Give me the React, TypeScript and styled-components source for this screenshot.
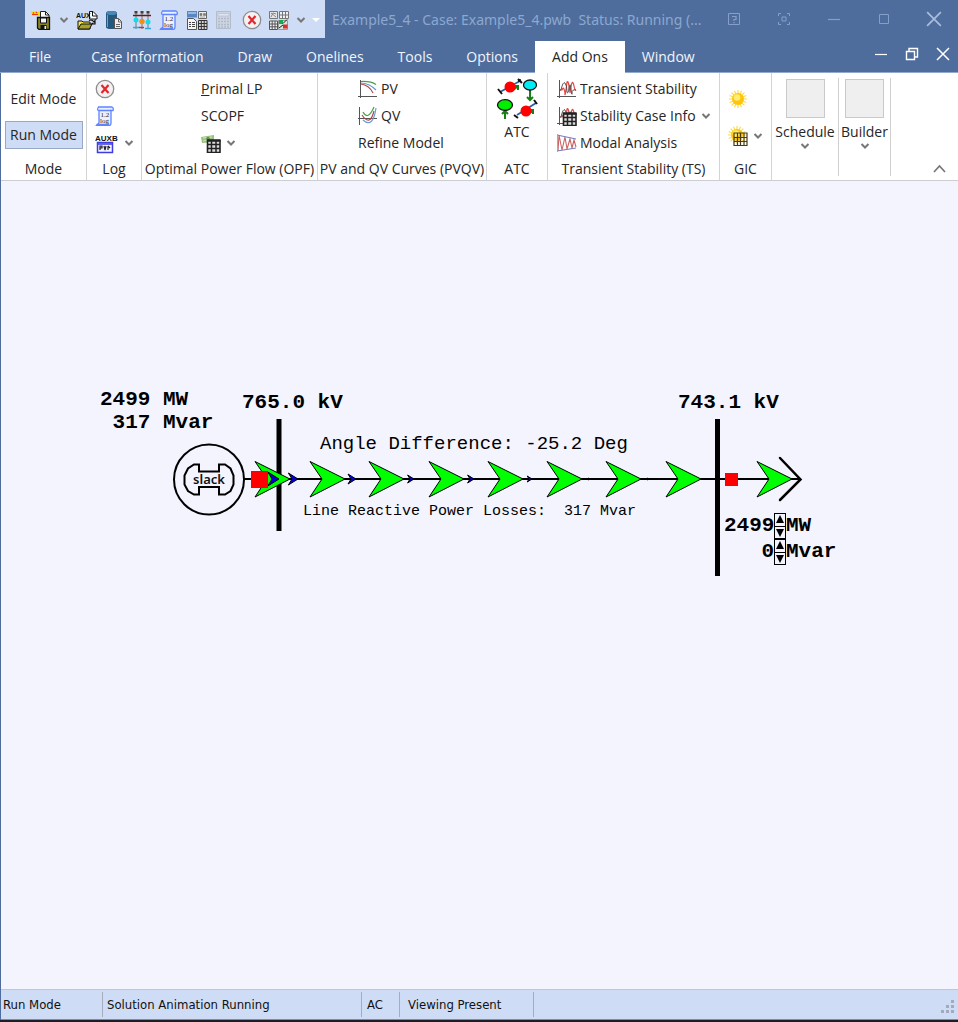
import React from "react";
import styled, { createGlobalStyle } from "styled-components";

const sans = `"Open Sans", "Noto Sans", sans-serif`;
const mono = `"Liberation Mono", monospace`;
const blue = "#4f6d9c";
const pale = "#cfdcf5";

const GlobalStyle = createGlobalStyle`
  * { box-sizing: border-box; }
  html, body { margin: 0; padding: 0; }
  body { font-family: ${sans}; font-size: 14px; color: #262626; background: ${blue}; }
  button { font: inherit; color: inherit; background: none; border: 0; padding: 0; margin: 0; }
  svg { display: block; flex: none; }
`;

const Frame = styled.div`
  display: flex;
  flex-direction: column;
  min-height: 100vh;
  border-bottom: 2px solid #1b1e25;
`;

const TitleBar = styled.header`
  display: flex;
  align-items: center;
  height: 38px;
`;

const QuickBar = styled.div`
  display: flex;
  align-items: center;
  align-self: stretch;
  flex: none;
  width: 300px;
  margin-left: 25px;
  padding: 2px 2px 0;
  background: ${pale};
`;

const QuickIcons = styled.div`
  display: flex;
  flex: 1;
`;

const IconButton = styled.button<{ $w?: number }>`
  display: flex;
  align-items: center;
  justify-content: center;
  height: 24px;
  ${(p) => (p.$w ? `width: ${p.$w}px; flex: none;` : "flex: 1;")}
`;

const Title = styled.h1`
  flex: 1;
  min-width: 0;
  margin: 0;
  padding-left: 7px;
  font-family: "Noto Sans", sans-serif;
  font-size: 14px;
  font-weight: 400;
  color: #8ba8d0;
  white-space: pre;
  overflow: hidden;
  text-overflow: ellipsis;
`;

const WindowControls = styled.div`
  display: flex;
  flex: none;
  margin-right: -1px;
`;

const TabRow = styled.nav`
  display: flex;
  align-items: flex-end;
  height: 35px;
  padding-left: 12px;
  border-bottom: 1px solid #92a9ce;
`;

const Tab = styled.button<{ $active?: boolean }>`
  height: ${(p) => (p.$active ? 32 : 31)}px;
  padding: 0 17px ${(p) => (p.$active ? 1 : 0)}px;
  white-space: nowrap;
  color: ${(p) => (p.$active ? "#262626" : "#f0f5ff")};
  background: ${(p) => (p.$active ? "#fff" : "transparent")};
  margin-bottom: ${(p) => (p.$active ? "-1px" : "0")};
`;

const FileTab = styled(Tab)`
  margin-right: 6px;
`;

const DocControls = styled.div`
  display: flex;
  margin-left: auto;
  align-self: flex-start;
  padding-top: 4px;
`;

const Ribbon = styled.section`
  display: flex;
  height: 108px;
  margin-left: 1px;
  background: #fff;
  border-bottom: 1px solid #cdced2;
`;

const Group = styled.div<{ $w: number }>`
  display: flex;
  flex-direction: column;
  flex: none;
  width: ${(p) => p.$w}px;
  border-right: 1px solid #d4d4d4;
`;

const GroupBody = styled.div<{ $align?: string; $pad?: number }>`
  display: flex;
  flex-direction: column;
  align-items: ${(p) => p.$align || "center"};
  padding: 2px 0 0 ${(p) => p.$pad || 0}px;
  height: 86px;
`;

const GroupName = styled.div`
  display: flex;
  justify-content: center;
  line-height: 20px;
  white-space: nowrap;
`;

const Command = styled.button`
  display: flex;
  align-items: center;
  gap: 3px;
  height: 27px;
  white-space: nowrap;
`;

const Caret = styled.span`
  margin-left: 2px;
`;

const ModeButton = styled.button<{ $on?: boolean }>`
  width: 78px;
  height: 28px;
  margin-top: 10px;
  padding-bottom: 2px;
  border: 1px solid ${(p) => (p.$on ? "#98a8c6" : "transparent")};
  background: ${(p) => (p.$on ? pale : "transparent")};

  & + & { margin-top: 8px; }
`;

const AtcButton = styled.button`
  display: flex;
  flex-direction: column;
  align-items: center;
  gap: 2px;
  margin-top: 3px;
  line-height: 20px;
`;

const GicButton = styled(Command)`
  height: 28px;
  margin-top: 10px;

  & + & { margin-top: 9px; }
`;

const Launcher = styled.button<{ $w: number }>`
  display: flex;
  flex-direction: column;
  align-items: center;
  flex: none;
  width: ${(p) => p.$w}px;
  height: 98px;
  margin-top: 5px;
  padding-top: 1px;
  border-right: 1px solid #cfcfcf;
  line-height: 20px;
`;

const Swatch = styled.span`
  width: 39px;
  height: 39px;
  margin-bottom: 4px;
  border: 1px solid #c9c9c9;
  background: #efefef;
`;

const Collapse = styled.button`
  margin: auto 12px 7px auto;
`;

const Canvas = styled.main`
  position: relative;
  flex: 1;
  min-height: 420px;
  margin-left: 1px;
  background: #f4f4fe;
  overflow: hidden;
`;

const Label = styled.div<{ $x: number; $y: number; $size?: number; $bold?: boolean }>`
  position: absolute;
  left: ${(p) => p.$x}px;
  top: ${(p) => p.$y}px;
  font-family: ${mono};
  font-size: ${(p) => p.$size || 21}px;
  font-weight: ${(p) => (p.$bold ? 700 : 400)};
  line-height: 23px;
  white-space: pre;
  color: #000;
`;

const LoadRow = styled(Label)`
  display: flex;
  align-items: center;
  line-height: 26px;
`;

const LoadValue = styled.span`
  width: 50px;
  text-align: right;
`;

const Spinner = styled.span`
  display: flex;
  flex-direction: column;
  width: 12px;
  height: 26px;
  border: 1px solid #000;
`;

const Step = styled.button`
  display: flex;
  flex: 1;
  align-items: center;
  justify-content: center;

  & + & { border-top: 1px solid #000; }
`;

const StatusBar = styled.footer`
  display: flex;
  align-items: center;
  height: 31px;
  margin-left: 1px;
  background: ${pale};
  border-top: 1px solid #c2c6d0;
  border-bottom: 1px solid #6f8fc2;
  font-family: "DejaVu Sans Condensed", "Noto Sans", sans-serif;
  font-size: 13px;
  color: #111;
`;

const StatusCell = styled.div<{ $w: number; $pad: number }>`
  width: ${(p) => p.$w}px;
  height: 25px;
  line-height: 25px;
  padding-left: ${(p) => p.$pad}px;
  border-right: 1px solid #a5acbb;
  white-space: nowrap;
`;

const Grip = styled.span`
  margin: 4px 4px 0 auto;
`;

const IconText = styled.text`
  font-family: "Liberation Sans Narrow", "Liberation Sans", sans-serif;
  font-weight: 700;
  fill: #111;
`;

const Chevron = () => (
  <svg width="10" height="8" viewBox="0 0 10 8">
    <path d="M1.500 2 5 5.500 8.500 2" fill="none" stroke="#777" strokeWidth="2" />
  </svg>
);

const SaveIcon = () => (
  <svg width="20" height="20" viewBox="0 0 20 20">
    <path d="M9.500 1.500h5l3.500 3.500V12h-8.500z" fill="#fff" stroke="#222" />
    <path d="M14.500 1.500v3.500h3.500" fill="none" stroke="#222" />
    <path d="M0 1l2 1 2-1 2 1 3-1v5H1z" fill="#ffd800" />
    <path d="M1 4.500h6M2 2.500l1 1M5 2l1 1" stroke="#e33b12" strokeWidth="1.200" />
    <path d="M6.500 7.500h12v12H8l-1.500-1.500z" fill="#8a8420" stroke="#111" strokeWidth="1.300" />
    <path d="M9.500 8h6v5h-6z" fill="#f3f3f3" stroke="#111" />
    <path d="M9.500 15h6v4.500h-6z" fill="#111" />
    <path d="M13.500 16H15v3h-1.500z" fill="#eee" />
  </svg>
);

const AuxOpenIcon = () => (
  <svg width="22" height="20" viewBox="0 0 22 20" overflow="visible">
    <path d="M13.500 1.500h3.500l4 4V9h-7.500z" fill="#fff" stroke="#111" />
    <path d="M16.500 1.500V6H21" fill="none" stroke="#111" />
    <IconText x="0" y="8" fontSize="7">AUX</IconText>
    <path d="M2 11h4l1 1h7v7H2z" fill="#f4e94c" stroke="#111" />
    <path d="M2 19l3-5h11l-2.500 5z" fill="#a8a02a" stroke="#111" />
    <path d="M13 10.500q3-1.500 5 1.500l1-1.500v3.500h-3l1.200-1" fill="none" stroke="#111" strokeWidth="1.200" />
  </svg>
);

const CaseIcon = () => (
  <svg width="20" height="20" viewBox="0 0 20 20">
    <path d="M2 3q0-2 5.500-2T13 3v14q0 2-5.500 2T2 17z" fill="#24587c" />
    <ellipse cx="7.500" cy="3" rx="5.500" ry="2" fill="#4789b4" />
    <path d="M3.500 5v12" stroke="#6fa5c8" />
    <path d="M10.500 8.500h4l3 3v7h-7z" fill="#eee" stroke="#555" />
    <path d="M14.500 8.500V12h3M12 14.500h4M12 16.500h4" fill="none" stroke="#666" />
  </svg>
);

const BusesIcon = () => (
  <svg width="20" height="20" viewBox="0 0 20 20">
    <path d="M4 1v18M10 1v18M16 1v18" stroke="#777" />
    <path d="M1 5.500h18" stroke="#7a1010" strokeWidth="1.500" />
    <path d="M2.500 1h3v2.500h-3zM8.500 1h3v2.500h-3zM14.500 1h3v2.500h-3z" fill="#443" />
    <circle cx="4" cy="10" r="2.500" fill="#16d9ea" />
    <circle cx="10" cy="11.500" r="2.700" fill="#f58d16" />
    <circle cx="16" cy="12" r="2.500" fill="#16d9ea" />
    <path d="M1 17.500h6M13 18.500h6" stroke="#30a8e0" strokeWidth="1.400" />
    <path d="M7 17.500h5" stroke="#e82020" strokeWidth="1.400" />
  </svg>
);

const LogIcon = () => (
  <svg width="20" height="20" viewBox="0 0 20 20">
    <path d="M3.500 1H17q2 1 1 3.500h-2V17q0 2.500-2 2.500H1.500L4 17V5Q1.500 4 3.500 1z" fill="#e9f0ff" stroke="#5f83ff" strokeWidth="1.300" />
    <path d="M4 4.500h12M1.500 18.500H14" stroke="#5f83ff" strokeWidth="1.600" />
    <text x="5.500" y="11" fontFamily="Liberation Serif" fontSize="7" fill="#222">1.2</text>
    <text x="5" y="17" fontFamily="Liberation Serif" fontSize="7" fill="#222">log</text>
  </svg>
);

const ModelIcon = () => (
  <svg width="22" height="20" viewBox="0 0 22 20">
    <path d="M1 1h10v6.500H1z" fill="#5588c5" />
    <path d="M2 3h8" stroke="#dbe8fa" />
    <path d="M12.500 1.500h8v7h-8z" fill="#eee" stroke="#666" />
    <path d="M14 3.500h2v2h-2zM17.500 3.500h2v2h-2zM14 7h5" fill="#777" stroke="#777" strokeWidth=".6" />
    <path d="M1.500 8.500h6l3 3v8h-9z" fill="#f5f5f5" stroke="#555" />
    <path d="M3 12.500h2M6 12.500h3M3 14.500h2M6 14.500h3M3 16.500h2M6 16.500h3" stroke="#444" />
    <path d="M12.500 10.500h8.500v9h-8.500zM15.300 10.500v9M18.200 10.500v9M12.500 13.500H21M12.500 16.500H21" fill="#d4d4d4" stroke="#333" />
  </svg>
);

const CalcIcon = () => (
  <svg width="18" height="20" viewBox="0 0 18 20">
    <path d="M1.500 1.500h14v17h-14z" fill="#cdd5e3" stroke="#b4bccb" />
    <path d="M3 3.500h11V6H3z" fill="#dfe6f2" stroke="#b4bccb" strokeWidth=".7" />
    <path d="M3 8.500h11M3 11.500h11M3 14.500h11M3 17h11" stroke="#b1bac9" strokeWidth="1.500" strokeDasharray="2 1" />
  </svg>
);

const StopIcon = () => (
  <svg width="20" height="20" viewBox="0 0 20 20">
    <circle cx="10" cy="10" r="8.700" fill="#f3f1f1" stroke="#8d8d8d" strokeWidth="1.300" />
    <path d="m6.500 6 7 8m0-8-7 8" stroke="#e5262b" strokeWidth="2.200" />
  </svg>
);

const GridsIcon = () => (
  <svg width="20" height="20" viewBox="0 0 20 20">
    <path d="M.5 1.500h8v7h-8z" fill="#e5e5e5" stroke="#777" />
    <path d="M2 3l5 4M2 7l2-4 3 1" stroke="#888" fill="none" />
    <path d="M10.500 1.500h9v7h-9zM13.500 1.500v7M16.500 1.500v7M10.500 5h9" fill="#f2f2f2" stroke="#777" />
    <path d="M.5 11h8v8.500h-8zM3.200 11v8.500M6 11v8.500M.5 14h8M.5 16.800h8" fill="#f2f2f2" stroke="#555" />
    <path d="M9.500 10.500h9v9h-9z" fill="#d8e6df" stroke="#999" />
    <path d="M10 10h4v4h-4z" fill="#16ab52" />
    <path d="M14 14.500h4.500v4H14z" fill="#e02b2b" />
    <path d="M18 9.500l-4 4M10 18l4-3" stroke="#222" />
  </svg>
);

const AuxLogIcon = () => (
  <svg width="24" height="20" viewBox="0 0 24 20" overflow="visible">
    <path d="M2.500 9.500h15v10h-15z" fill="#f2f4ff" stroke="#3c3ce0" strokeWidth="1.500" />
    <IconText x="0" y="8" fontSize="8">AUXB</IconText>
    <path d="M3 11h14" stroke="#3c3ce0" strokeWidth="1.500" />
    <path d="M5 17v-4h2v2H5m4-2 1 4 1-4m2 0v4m0-4 2 2" fill="none" stroke="#222" strokeWidth="1.200" />
  </svg>
);

const TableGrid = () => (
  <g>
    <path d="M6.500 7.500h12.500v12H6.500z" fill="#ddd" stroke="#222" strokeWidth="1.600" />
    <path d="M6 7.500h13.500" stroke="#222" strokeWidth="2.400" />
    <path d="M10.500 7v12M15 7v12M6 11.500h13M6 15.500h13" stroke="#222" strokeWidth="1.500" />
  </g>
);

const OpfIcon = () => (
  <svg width="20" height="20" viewBox="0 0 20 20">
    <path d="M0 4l13-2v7L1 10z" fill="#9ac080" />
    <path d="M2 5l9-1M2 8l4-1" stroke="#d2e6c4" />
    <circle cx="7" cy="5.500" r="1.800" fill="#5f9548" />
    <TableGrid />
  </svg>
);

const PvIcon = () => (
  <svg width="20" height="20" viewBox="0 0 20 20">
    <path d="M2.500 1v18M0 17.500h19" stroke="#555" fill="none" />
    <path d="M3 2.500q10-.5 15 3" stroke="#4aa04a" fill="none" strokeWidth="1.200" />
    <path d="M3 4q8 0 15 7" stroke="#6b9bd6" fill="none" strokeWidth="1.200" />
    <path d="M3 5q8 1 12 9" stroke="#b54545" fill="none" strokeWidth="1.200" />
  </svg>
);

const QvIcon = () => (
  <svg width="20" height="20" viewBox="0 0 20 20">
    <path d="M1.500 1v18M0 12.500h19" stroke="#555" fill="none" />
    <path d="M5 6q5 9 11-5" stroke="#4aa04a" fill="none" strokeWidth="1.200" />
    <path d="M4 9q8 12 12-4" stroke="#b54545" fill="none" strokeWidth="1.200" />
    <path d="M5 14q10 9 13-12" stroke="#6b9bd6" fill="none" strokeWidth="1.200" />
  </svg>
);

const AtcIcon = () => (
  <svg width="42" height="42" viewBox="0 0 42 42">
    <path d="m4 14 20-11" stroke="#2a5ca8" strokeWidth="1.700" />
    <path d="m2 11 4 5M22 1l4 4m-4-2 3-1" stroke="#111" strokeWidth="2" />
    <path d="m16 13 6-5m-4 0h4v4" stroke="#168016" strokeWidth="2" fill="none" />
    <circle cx="14" cy="9" r="5.500" fill="#f00" />
    <path d="M34 11v10m-3-2 3 3 3-3" stroke="#168016" strokeWidth="2" fill="none" />
    <ellipse cx="34" cy="7" rx="6.500" ry="5" fill="#00ecf4" stroke="#111" strokeWidth="1.300" />
    <path d="M9 31v10m-3-5 3-3 3 3" stroke="#168016" strokeWidth="2" fill="none" />
    <ellipse cx="9" cy="27" rx="7.500" ry="5.300" fill="#0e0" stroke="#111" strokeWidth="1.300" />
    <path d="m21 37 19-12" stroke="#2a5ca8" strokeWidth="1.700" />
    <path d="m18 37 4 3M38 22l3 4" stroke="#111" strokeWidth="2" />
    <path d="m32 36 5-4m-3 0h3v4" stroke="#168016" strokeWidth="2" fill="none" />
    <circle cx="30" cy="33" r="5.500" fill="#f00" />
  </svg>
);

const Wave = () => (
  <g fill="none">
    <path d="M2.500 1v18M0 17.500h19" stroke="#555" />
    <path d="M3 11h2q1-3 2-1t1 6q1-4 2-13 1-2 2 4t1 7q1-8 2-10t2 3 2 4" stroke="#e04545" strokeWidth="1.200" />
    <path d="M3 11h1q2-9 4-7t2 9q1 3 2-4t2 1 1 4 4-3" stroke="#444" strokeWidth=".9" />
  </g>
);

const TransientIcon = () => (
  <svg width="20" height="20" viewBox="0 0 20 20"><Wave /></svg>
);

const StabilityIcon = () => (
  <svg width="20" height="20" viewBox="0 0 20 20"><Wave /><TableGrid /></svg>
);

const ModalIcon = () => (
  <svg width="20" height="20" viewBox="0 0 20 20">
    <path d="M1 18 2 2l3 15L8 4l2 12 3-10 2 9 2-8 2 7" fill="none" stroke="#c86464" strokeWidth="1.100" />
    <path d="M0 2l19 4M0 18l19-3" stroke="#7278bd" />
    <path d="M.5 1v18" stroke="#aaa" />
  </svg>
);

const SunShape = () => (
  <g>
    <path d="M10 1v18M1 10h18M3.600 3.600l12.800 12.800M16.400 3.600 3.600 16.400M6.500 1.700l7 16.600M13.500 1.700l-7 16.600M1.700 6.500l16.600 7M1.700 13.500l16.600-7" stroke="#fbdc4c" strokeWidth="1.200" />
    <circle cx="10" cy="10" r="6" fill="#ffc50a" />
    <circle cx="9" cy="8.500" r="3.300" fill="#ffec70" />
  </g>
);

const SunIcon = () => (
  <svg width="20" height="20" viewBox="0 0 20 20"><SunShape /></svg>
);

const SunGridIcon = () => (
  <svg width="20" height="20" viewBox="0 0 20 20">
    <g transform="translate(-1 -1)"><SunShape /></g>
    <path d="M6 7h13v12.500H6zM9.500 7v12M12.500 7v12M16 7v12M6 11.500h13M6 15.500h13" fill="none" stroke="#4a3c10" strokeWidth="1.200" />
  </svg>
);

const Glyph = ({ kind, color, size = 14 }: { kind: string; color: string; size?: number }) => (
  <svg width={size} height={size} viewBox="0 0 14 14" fill="none" stroke={color}>
    {kind === "help" && (
      <>
        <path d="M1.500 1.500h11v11h-11z" />
        <path d="M5 4.500h4v3H7v1.500M7 10v1.200" strokeWidth="1.200" />
      </>
    )}
    {kind === "focus" && <path d="M1.500 4V1.500H4M10 1.500h2.500V4M12.500 10v2.500H10M4 12.500H1.500V10M5 5h4v4H5z" />}
    {kind === "min" && <path d="M1 7.500h12" strokeWidth="1.200" />}
    {kind === "max" && <path d="M2.500 2.500h9v9h-9z" />}
    {kind === "restore" && <path d="M1.500 4.500h8v8h-8zM4 4V1.500h8.500V10H10" strokeWidth="1.400" />}
    {kind === "close" && <path d="m1 1 12 12M13 1 1 13" strokeWidth="1.500" />}
  </svg>
);

const GREEN_ARROWS = [255, 310, 369, 429, 488, 547, 606, 666, 757];
const BLUE_ARROWS = [
  { tip: 279, size: 7 },
  { tip: 298, size: 6 },
  { tip: 356, size: 5 },
  { tip: 414, size: 4 },
  { tip: 474, size: 4 },
  { tip: 532, size: 3 },
  { tip: 590, size: 1 },
  { tip: 649, size: 1 },
];

const Diagram = () => (
  <svg width="860" height="420" viewBox="1 181 860 420" role="img" aria-label="Two bus oneline diagram">
    <circle cx="209" cy="479.500" r="35" fill="none" stroke="#000" strokeWidth="2" />
    <path
      d="M199 464.500h-5l-6 4-3.500 7v9l3.500 6.500 6 3.500h5v-7.500h20v7.500h6l5.500-3.500 3-6.500v-9l-3-7-5.500-4h-6v7h-20z"
      fill="none" stroke="#000" strokeWidth="2"
    />
    <text x="209" y="484" textAnchor="middle" fontFamily="Noto Sans" fontWeight="600" fontSize="13" fill="#111">slack</text>
    <path d="M244 479h556" stroke="#000" strokeWidth="2" />
    <path d="M279 419v112M717.500 419v157" stroke="#000" strokeWidth="5" />
    <path d="m780 458 20.500 21.500L780 500" fill="none" stroke="#000" strokeWidth="2.500" strokeLinecap="round" />
    {GREEN_ARROWS.map((x) => (
      <path key={x} d={`M${x} 461.500l35 17.500-35 18 12-18z`} fill="#0f0" stroke="#000" />
    ))}
    {BLUE_ARROWS.map(({ tip, size }) => (
      <path key={tip} d={`M${tip} 479l${-size * 1.6}${-size}${" "}${size * 0.6} ${size}${" "}${-size * 0.6} ${size}z`} fill="#0000d8" stroke="#000" />
    ))}
    <path d="M251 471h17v17h-17zM725 473h13v13h-13z" fill="#f00" />
  </svg>
);

const DiagramLayer = styled.div`
  position: absolute;
  left: 0;
  top: 0;
`;

const Load = ({ y, value, unit }: { y: number; value: string; unit: string }) => (
  <LoadRow $x={723} $y={y} $bold>
    <LoadValue>{value}</LoadValue>
    <Spinner>
      <Step aria-label={`Increase ${unit}`}>
        <svg width="8" height="9" viewBox="0 0 8 9"><path d="M4 0l4 8H0z" /></svg>
      </Step>
      <Step aria-label={`Decrease ${unit}`}>
        <svg width="8" height="9" viewBox="0 0 8 9"><path d="M4 9l4-8H0z" /></svg>
      </Step>
    </Spinner>
    <span>{unit}</span>
  </LoadRow>
);

const QUICK = [
  { name: "Open auxiliary file", icon: <AuxOpenIcon /> },
  { name: "Case", icon: <CaseIcon /> },
  { name: "Buses", icon: <BusesIcon /> },
  { name: "Log", icon: <LogIcon /> },
  { name: "Model explorer", icon: <ModelIcon /> },
  { name: "Calculator", icon: <CalcIcon /> },
  { name: "Abort", icon: <StopIcon /> },
  { name: "Views", icon: <GridsIcon /> },
];

const TABS = ["Case Information", "Draw", "Onelines", "Tools", "Options", "Add Ons", "Window"];

export default function App() {
  return (
    <Frame>
      <GlobalStyle />
      <TitleBar>
        <QuickBar>
          <IconButton $w={27} aria-label="Save"><SaveIcon /></IconButton>
          <IconButton $w={19} aria-label="Save options"><Chevron /></IconButton>
          <QuickIcons>
            {QUICK.map((q) => (
              <IconButton key={q.name} aria-label={q.name}>{q.icon}</IconButton>
            ))}
          </QuickIcons>
          <IconButton $w={16} aria-label="View options"><Chevron /></IconButton>
          <IconButton $w={14} aria-label="Customize">
            <svg width="8" height="4" viewBox="0 0 8 4"><path d="M0 0h8L4 4z" fill="#fff" /></svg>
          </IconButton>
        </QuickBar>
        <Title>{"Example5_4 - Case: Example5_4.pwb  Status: Running (..."}</Title>
        <WindowControls>
          {["help", "focus", "min", "max", "close"].map((k) => (
            <IconButton key={k} $w={50} aria-label={k}>
              <Glyph kind={k} color={k === "close" ? "#a9bddd" : "#859fc8"} size={k === "close" ? 16 : 14} />
            </IconButton>
          ))}
        </WindowControls>
      </TitleBar>
      <TabRow>
        <FileTab>File</FileTab>
        {TABS.map((t) => (
          <Tab key={t} $active={t === "Add Ons"}>{t}</Tab>
        ))}
        <DocControls>
          {["min", "restore", "close"].map((k) => (
            <IconButton key={k} $w={31} aria-label={`${k} document`}>
              <Glyph kind={k} color="#fff" />
            </IconButton>
          ))}
        </DocControls>
      </TabRow>

      <Ribbon>
        <Group $w={86}>
          <GroupBody>
            <ModeButton>Edit Mode</ModeButton>
            <ModeButton $on>Run Mode</ModeButton>
          </GroupBody>
          <GroupName>Mode</GroupName>
        </Group>
        <Group $w={55}>
          <GroupBody $align="flex-start" $pad={8}>
            <Command aria-label="Abort log"><StopIcon /></Command>
            <Command aria-label="Show log"><LogIcon /></Command>
            <Command aria-label="Auxiliary log"><AuxLogIcon /><Caret><Chevron /></Caret></Command>
          </GroupBody>
          <GroupName>Log</GroupName>
        </Group>
        <Group $w={176}>
          <GroupBody $align="flex-start" $pad={59}>
            <Command><span><u>P</u>rimal LP</span></Command>
            <Command>SCOPF</Command>
            <Command aria-label="OPF tables"><OpfIcon /><Caret><Chevron /></Caret></Command>
          </GroupBody>
          <GroupName>Optimal Power Flow (OPF)</GroupName>
        </Group>
        <Group $w={169}>
          <GroupBody $align="flex-start" $pad={40}>
            <Command><PvIcon />PV</Command>
            <Command><QvIcon />QV</Command>
            <Command>Refine Model</Command>
          </GroupBody>
          <GroupName>PV and QV Curves (PVQV)</GroupName>
        </Group>
        <Group $w={61}>
          <GroupBody>
            <AtcButton><AtcIcon />ATC</AtcButton>
          </GroupBody>
          <GroupName>ATC</GroupName>
        </Group>
        <Group $w={172}>
          <GroupBody $align="flex-start" $pad={9}>
            <Command><TransientIcon />Transient Stability</Command>
            <Command><StabilityIcon />Stability Case Info<Caret><Chevron /></Caret></Command>
            <Command><ModalIcon />Modal Analysis</Command>
          </GroupBody>
          <GroupName>Transient Stability (TS)</GroupName>
        </Group>
        <Group $w={52}>
          <GroupBody $align="flex-start" $pad={8}>
            <GicButton aria-label="GIC"><SunIcon /></GicButton>
            <GicButton aria-label="GIC tables"><SunGridIcon /><Caret><Chevron /></Caret></GicButton>
          </GroupBody>
          <GroupName>GIC</GroupName>
        </Group>
        <Launcher $w={67}><Swatch />Schedule<Chevron /></Launcher>
        <Launcher $w={52}><Swatch />Builder<Chevron /></Launcher>
        <Collapse aria-label="Collapse ribbon"><svg width="13" height="9" viewBox="0 0 13 9"><path d="m1 8 5.500-6L12 8" fill="none" stroke="#777" strokeWidth="1.700" /></svg></Collapse>
      </Ribbon>

      <Canvas>
        <DiagramLayer><Diagram /></DiagramLayer>
        <Label $x={99} $y={207} $bold>{"2499 MW\n 317 Mvar"}</Label>
        <Label $x={241} $y={210} $bold>765.0 kV</Label>
        <Label $x={677} $y={210} $bold>743.1 kV</Label>
        <Label $x={319} $y={252} $size={19}>Angle Difference: -25.2 Deg</Label>
        <Label $x={302} $y={319} $size={15}>{"Line Reactive Power Losses:  317 Mvar"}</Label>
        <Load y={332} value="2499" unit="MW" />
        <Load y={358} value="0" unit="Mvar" />
      </Canvas>

      <StatusBar>
        <StatusCell $w={102} $pad={2}>Run Mode</StatusCell>
        <StatusCell $w={259} $pad={4}>Solution Animation Running</StatusCell>
        <StatusCell $w={38} $pad={5}>AC</StatusCell>
        <StatusCell $w={134} $pad={8}>Viewing Present</StatusCell>
        <Grip>
          <svg width="13" height="13" viewBox="0 0 13 13" fill="#a3aaba">
            <path d="M10 0h3v3h-3zM5 5h3v3H5zM10 5h3v3h-3zM0 10h3v3H0zM5 10h3v3H5zM10 10h3v3h-3z" />
          </svg>
        </Grip>
      </StatusBar>
    </Frame>
  );
}
